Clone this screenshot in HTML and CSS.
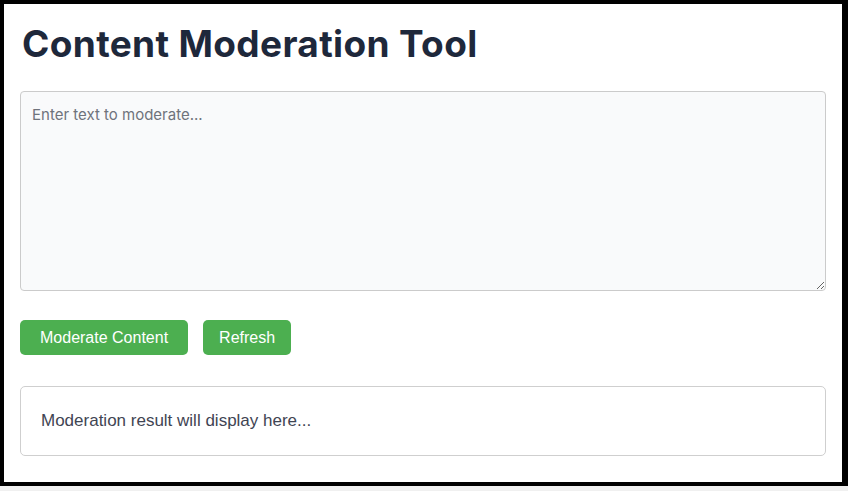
FILE: index.html
```html
<!DOCTYPE html>
<html lang="en">
<head>
<meta charset="utf-8">
<title>Content Moderation Tool</title>
<link rel="stylesheet" href="styles.css">
</head>
<body>
<div class="frame">
  <main class="app">
    <h1 class="title">Content Moderation Tool</h1>
    <textarea class="input" placeholder="Enter text to moderate..."></textarea>
    <div class="actions">
      <button class="btn btn-primary" type="button">Moderate Content</button>
      <button class="btn btn-secondary" type="button">Refresh</button>
    </div>
    <div class="result">Moderation result will display here...</div>
  </main>
</div>
</body>
</html>
```

FILE: styles.css
```css
html, body {
  margin: 0;
  padding: 0;
}
body {
  background: #f0f0f0;
  width: 848px;
  height: 491px;
  overflow: hidden;
}
.frame {
  box-sizing: border-box;
  width: 848px;
  height: 486px;
  border-style: solid;
  border-color: #000;
  border-width: 4px 6px 4px 4px;
  background: #fff;
}
.app {
  padding: 18px 16px 0 16px;
}
.title {
  margin: 0 0 25px 2px;
  font-family: "Inter", "Liberation Sans", sans-serif;
  font-weight: 700;
  font-size: 37px;
  line-height: 44px;
  letter-spacing: 0.35px;
  color: #1e283b;
}
.input {
  display: block;
  box-sizing: border-box;
  width: 100%;
  height: 200px;
  margin: 0;
  padding: 12px 11px;
  border: 1px solid #cbcbcb;
  border-radius: 4px;
  background: #f9fafb;
  font-family: "Inter", "Liberation Sans", sans-serif;
  font-size: 15px;
  line-height: 1.5;
  color: #1e283b;
  resize: vertical;
}
.input::placeholder {
  color: #6f737b;
}
.actions {
  display: flex;
  gap: 15px;
  margin-top: 29px;
}
.btn {
  height: 35px;
  border: none;
  border-radius: 5px;
  background: #4caf50;
  color: #fff;
  font-family: "Liberation Sans", Arial, sans-serif;
  font-size: 16px;
  line-height: 35px;
  cursor: pointer;
}
.btn-primary {
  padding: 0 20px;
}
.btn-secondary {
  padding: 0 16px;
}
.result {
  margin-top: 31px;
  padding: 20px;
  border: 1px solid #cfcfcf;
  border-radius: 5px;
  font-family: "Liberation Sans", Arial, sans-serif;
  font-size: 17px;
  line-height: 28px;
  color: #3f4553;
}
```
